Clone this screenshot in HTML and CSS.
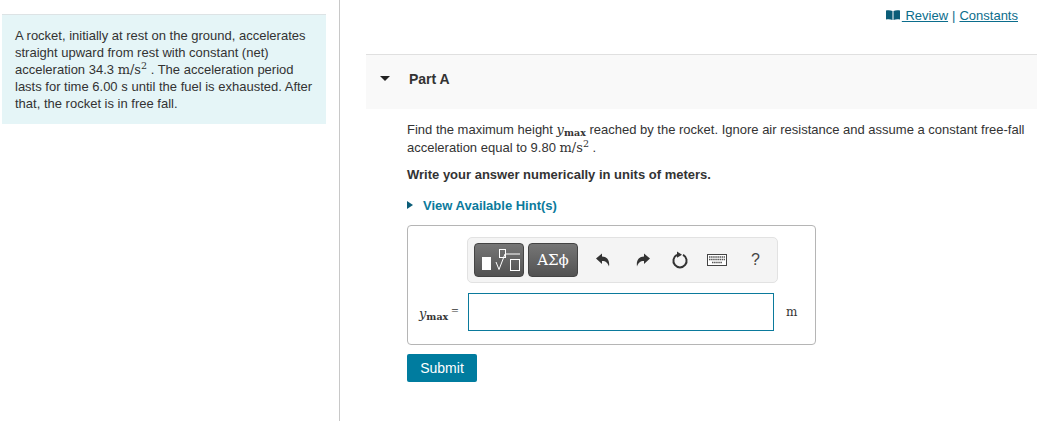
FILE: index.html
```html
<!DOCTYPE html>
<html lang="en">
<head>
<meta charset="utf-8">
<title>Part A</title>
<link rel="stylesheet" href="styles.css">
</head>
<body>
<div class="page">
  <aside class="left">
    <div class="intro">A rocket, initially at rest on the ground, accelerates straight upward from rest with constant (net) acceleration 34.3 <span class="math">m/s<sup>2</sup></span> . The acceleration period lasts for time 6.00 <span class="math">s</span> until the fuel is exhausted. After that, the rocket is in free fall.</div>
  </aside>
  <main class="right">
    <div class="toplinks">
      <svg class="book" width="14" height="10" viewBox="0 0 14 10"><path d="M0 0.500C2 0 4.500 0 6.500 1V10C4.500 9 2 9 0 9.500Z M7.500 1C9.500 0 12 0 14 0.500V9.500C12 9 9.500 9 7.500 10Z" fill="#0b5d78"/></svg>
      <a class="tl" href="#">&nbsp;Review</a><span class="sep">|</span><a class="tl" href="#">Constants</a>
    </div>
    <div class="parthead">
      <span class="tri-down"></span>
      <span class="partname">Part A</span>
    </div>
    <div class="partbody">
      <p class="q">Find the maximum height <span class="math var">y<sub>max</sub></span> reached by the rocket. Ignore air resistance and assume a constant free-fall acceleration equal to 9.80 <span class="math">m/s<sup>2</sup></span> .</p>
      <p class="instr">Write your answer numerically in units of meters.</p>
      <div class="hint"><span class="tri-right"></span><a class="hintlink" href="#">View Available Hint(s)</a></div>
      <div class="editor">
        <div class="tools">
          <button class="tbtn t1" type="button">
            <svg width="48" height="32" viewBox="0 0 48 32"><rect x="7" y="13" width="9" height="13" fill="#fff"/><rect x="24.500" y="5.500" width="6" height="8" fill="none" stroke="#fff"/><path d="M21 18l3 7.500 6-15.500h15" fill="none" stroke="#fff"/><rect x="35.500" y="15.500" width="9" height="11" fill="none" stroke="#fff"/></svg>
          </button>
          <button class="tbtn t2" type="button">ΑΣϕ</button>
          <svg class="ic undo" width="16" height="16" viewBox="0 0 16 16"><path d="M1 6.500L7 1.500V4.500C12 4.500 15 8.500 14 14.500C12.800 11 11 9 7 9V12Z" fill="#333"/></svg>
          <svg class="ic redo" width="16" height="16" viewBox="0 0 16 16"><path d="M15 6.500L9 1.500V4.500C4 4.500 1 8.500 2 14.500C3.200 11 5 9 9 9V12Z" fill="#333"/></svg>
          <svg class="ic reload" width="18" height="18" viewBox="0 0 18 18"><path d="M6 3.900A6.600 6.600 0 1 0 12 3.900" fill="none" stroke="#333" stroke-width="2"/><path d="M6 0.500L11 3.800L6 6.800Z" fill="#333"/></svg>
          <svg class="ic kb" width="20" height="12" viewBox="0 0 20 12"><rect x="0.500" y="0.500" width="19" height="11" fill="#fff" stroke="#444"/><path d="M2 3h16M2 5.500h16M5 8.500h10" stroke="#555" stroke-width="1.500" stroke-dasharray="1.500 .6"/></svg>
          <span class="help">?</span>
        </div>
        <div class="answer">
          <span class="label"><span class="math var">y<sub>max</sub></span><span class="eq">=</span></span>
          <input class="field" type="text" aria-label="answer">
          <span class="unit">m</span>
        </div>
      </div>
      <button class="submit" type="button">Submit</button>
    </div>
  </main>
</div>
</body>
</html>
```
FILE: styles.css
```css
* { box-sizing: border-box; }
html, body { margin: 0; padding: 0; background: #fff; }
body { font-family: "Liberation Sans", Arial, sans-serif; font-size: 13px; color: #333; overflow: hidden; }
.page { display: flex; height: 421px; width: 1040px; }
.left { width: 340px; flex: none; border-right: 1px solid #c8c8c8; padding: 14px 13px 0 2px; }
.intro { background: #e5f5f7; border-top: 1px solid #dde3e5; padding: 12px 12px 0 13px; height: 110px; line-height: 17px; }
.math { font-family: "DejaVu Serif", "Liberation Serif", serif; font-size: 13px; line-height: 1; }
.math sup { font-size: 9.500px; line-height: 0; vertical-align: 5px; }
.math sub { font-size: 9.500px; line-height: 0; vertical-align: -2px; font-style: normal; font-weight: 700; }
.var { font-style: italic; }
.right { flex: 1; padding-left: 26px; padding-right: 3px; min-width: 0; }
.toplinks { display: flex; justify-content: flex-end; align-items: center; height: 54px; padding: 8px 19px 32px 0; color: #0b6d8c; }
.book { margin-right: 2px; }
.tl { color: #0b6d8c; text-decoration: underline; }
.sep { margin: 0 4px; }
.parthead { display: flex; align-items: center; height: 55px; background: #f9f9f9; border-top: 1px solid #e0e0e0; padding: 0 0 7px 14px; }
.tri-down { width: 0; height: 0; border-left: 5px solid transparent; border-right: 5px solid transparent; border-top: 5px solid #222; }
.partname { font-weight: 700; margin-left: 19px; color: #333; font-size: 14px; }
.partbody { padding-left: 41px; }
.q { margin: 12px 0 0; line-height: 18px; width: 630px; }
.instr { margin: 9px 0 0; font-weight: 700; line-height: 18px; }
.hint { display: flex; align-items: center; margin-top: 12px; height: 18px; }
.tri-right { width: 0; height: 0; border-top: 4.500px solid transparent; border-bottom: 4.500px solid transparent; border-left: 6px solid #0b5d78; margin-right: 10px; }
.hintlink { color: #0b7a9c; font-weight: 700; text-decoration: none; }
.editor { width: 409px; height: 120px; margin-top: 11px; background: #fff; border: 1px solid #b5b5b5; border-radius: 4px; padding: 11px 0 0 59px; }
.tools { display: flex; align-items: center; width: 311px; height: 46px; padding: 0 6px; background: #f4f4f4; border: 1px solid #e2e2e2; border-radius: 5px; }
.tbtn { height: 34px; border: 1px solid #444; border-radius: 4px; background: linear-gradient(#767676, #525252); color: #fff; padding: 0; display: flex; align-items: center; justify-content: center; flex: none; }
.t1 { width: 50px; margin-right: 4px; }
.t2 { width: 50px; font-family: "DejaVu Serif", "Liberation Serif", serif; font-size: 15px; }
.ic { flex: none; }
.undo { margin-left: 17px; }
.redo { margin-left: 24px; }
.reload { margin-left: 20px; }
.kb { margin-left: 18px; }
.help { margin-left: 24px; font-size: 16px; color: #444; }
.answer { display: flex; align-items: center; margin: 10px 0 0 -48px; }
.label { width: 48px; flex: none; }
.eq { margin-left: 3px; font-family: "Liberation Serif", serif; vertical-align: 3px; }
.field { width: 306px; height: 38px; border: 1px solid #0b7a9c; background: #fff; padding: 0; margin: 0 0 0 1px; outline: none; }
.unit { margin-left: 12px; font-family: "DejaVu Serif", serif; font-size: 12px; }
.submit { display: block; margin-top: 9px; width: 70px; height: 28px; background: #007c9f; border: 0; border-radius: 2px; color: #fff; font-family: "Liberation Sans", sans-serif; font-size: 14px; padding: 0; }
```
